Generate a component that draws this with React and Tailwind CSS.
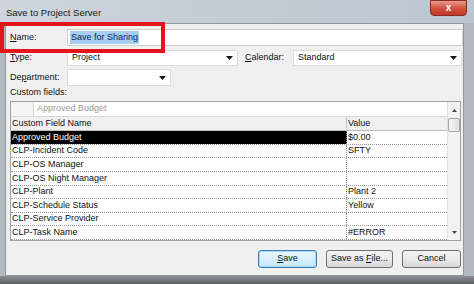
import React from 'react'

const rows = [
  { name: 'Approved Budget', value: '$0.00', selected: true },
  { name: 'CLP-Incident Code', value: 'SFTY' },
  { name: 'CLP-OS Manager', value: '' },
  { name: 'CLP-OS Night Manager', value: '' },
  { name: 'CLP-Plant', value: 'Plant 2' },
  { name: 'CLP-Schedule Status', value: 'Yellow' },
  { name: 'CLP-Service Provider', value: '' },
  { name: 'CLP-Task Name', value: '#ERROR' },
]

const Arrow = () => (
  <svg width="7" height="4" viewBox="0 0 7 4" className="shrink-0">
    <path d="M0 0 L7 0 L3.5 4 Z" fill="#111" />
  </svg>
)

const Select = ({ value, className }) => (
  <div className={'flex items-center justify-between bg-white border border-[#dcdcdc] pl-[4px] pr-[4px] ' + className}>
    <span>{value}</span>
    <Arrow />
  </div>
)

const App = () => {
  return (
    <div className="relative w-[474px] h-[284px] overflow-hidden flex flex-col bg-[#b9bec4] text-[9px] text-[#111]" style={{ fontFamily: '"Liberation Sans", Arial, sans-serif' }}>
      {/* title bar */}
      <div className="h-[23px] flex items-start justify-between bg-gradient-to-r from-[#cfd6dd] via-[#c3cbd3] to-[#bdc6cf]">
        <div className="pl-[6px] pt-[6px] text-[9.5px] text-[#1a1a1a]">Save to Project Server</div>
        <div className="mr-[7px] w-[37px] h-[16px] rounded-b-[4px] border border-[#8a2a22] bg-gradient-to-b from-[#e99a8c] via-[#d3523f] to-[#c0382a] flex items-center justify-center">
          <span className="text-white font-bold text-[10px] leading-none">x</span>
        </div>
      </div>

      <div className="flex flex-1">
        <div className="w-[5px] bg-[#b4bac1]" />
        <div className="flex-1 bg-[#f0f0f0] border border-[#8f979f] flex flex-col">
          {/* name */}
          <div className="flex items-center h-[17px] mt-[5px] pl-[4px]">
            <div className="w-[57px]"><u>N</u>ame:</div>
            <div className="flex-1 h-[17px] bg-white border border-[#cfcfcf] flex items-center pl-[2px]">
              <span className="bg-[#a6cff2] text-[#0d1d5c] px-[1px]">Save for Sharing</span>
            </div>
          </div>
          {/* type / calendar */}
          <div className="flex items-center h-[16px] mt-[4px] pl-[4px]">
            <div className="w-[57px]"><u>T</u>ype:</div>
            <Select value="Project" className="w-[171px] h-[16px]" />
            <div className="w-[55px] pl-[7px]"><u>C</u>alendar:</div>
            <Select value="Standard" className="w-[169px] h-[16px]" />
          </div>
          {/* department */}
          <div className="flex items-center h-[17px] mt-[3px] pl-[4px]">
            <div className="w-[57px]">De<u>p</u>artment:</div>
            <Select value="" className="w-[104px] h-[17px]" />
          </div>
          <div className="pl-[4px] mt-[1px] h-[12px] flex items-center">Custom fields:</div>

          {/* table */}
          <div className="ml-[4px] mt-[2px] w-[451px] h-[140px] border border-[#a0a0a0] bg-white flex">
            <div className="w-[436px] flex flex-col">
              <div className="h-[16px] flex border-b border-[#d8d8d8]">
                <div className="w-[23px] bg-[#f4f4f4] border-r border-[#d8d8d8]" />
                <div className="flex-1 flex items-center pl-[3px] text-[#9a9a9a]">Approved Budget</div>
              </div>
              <div className="h-[14px] flex bg-[#f0f0f0] border-b border-[#bdbdbd]">
                <div className="w-[336px] flex items-center pl-[1px] border-r border-[#c8c8c8]">Custom Field Name</div>
                <div className="flex-1 flex items-center pl-[1px]">Value</div>
              </div>
              {rows.map((r) => (
                <div key={r.name} className="h-[13.6px] flex border-b border-dotted border-[#9a9a9a]">
                  <div className={'w-[336px] flex items-center pl-[1px] border-r border-dotted border-[#8a8a8a] ' + (r.selected ? 'bg-black text-white' : '')}>{r.name}</div>
                  <div className="flex-1 flex items-center pl-[1px]">{r.value}</div>
                </div>
              ))}
            </div>
            {/* scrollbar */}
            <div className="flex-1 bg-[#f2f2f2] border-l border-[#e0e0e0] flex flex-col items-center">
              <div className="h-[16px] flex items-center justify-center">
                <svg width="5" height="3" viewBox="0 0 5 3"><path d="M0 3 L5 3 L2.5 0 Z" fill="#444" /></svg>
              </div>
              <div className="w-[12px] h-[14px] bg-gradient-to-r from-[#f6f6f6] to-[#e0e0e0] border border-[#a5a5a5] rounded-[2px]" />
              <div className="flex-1" />
              <div className="h-[16px] flex items-center justify-center">
                <svg width="5" height="3" viewBox="0 0 5 3"><path d="M0 0 L5 0 L2.5 3 Z" fill="#444" /></svg>
              </div>
            </div>
          </div>

          {/* buttons */}
          <div className="flex justify-end gap-[9px] mt-[9px] pr-[2px]">
            <div className="w-[59px] h-[18px] rounded-[3px] border border-[#3c7fb1] bg-gradient-to-b from-[#eaf6fd] via-[#d9f0fc] to-[#bee6fd] flex items-center justify-center shadow-[inset_0_0_0_1px_#a7d8f5]">
              <span><u>S</u>ave</span>
            </div>
            <div className="w-[67px] h-[18px] rounded-[3px] border border-[#707070] bg-gradient-to-b from-[#f2f2f2] via-[#ebebeb] to-[#d6d6d6] flex items-center justify-center">
              <span>Save as <u>F</u>ile...</span>
            </div>
            <div className="w-[59px] h-[18px] rounded-[3px] border border-[#707070] bg-gradient-to-b from-[#f2f2f2] via-[#ebebeb] to-[#d6d6d6] flex items-center justify-center">
              <span>Cancel</span>
            </div>
          </div>
        </div>
        <div className="w-[10px] bg-[#b4bac1]" />
      </div>
      <div className="h-[8px] bg-gradient-to-b from-[#8d9197] to-[#5d6166]" />

      {/* red annotation box */}
      <div className="absolute left-0 top-[22px] w-[165px] h-[31px] border-[4px] border-[#e3141e]" />
    </div>
  )
}

export default App
